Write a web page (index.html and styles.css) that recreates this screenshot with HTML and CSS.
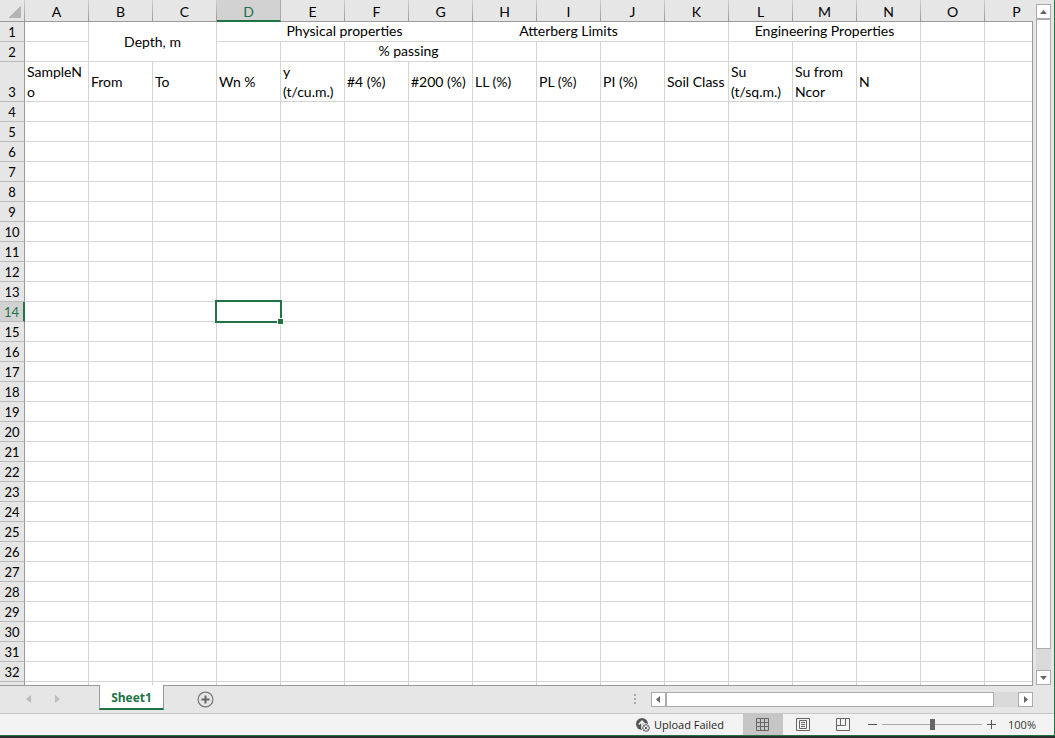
FILE: index.html
```html
<!DOCTYPE html>
<html lang="en">

<head>
  <meta charset="utf-8">
  <meta name="viewport" content="width=device-width">
  <title>Sheet1</title>
  <link rel="stylesheet" href="styles.css">
</head>

<body>
  <div class="window">
    <div class="workarea">
      <div class="grid" id="grid">
        <table class="sheet">
          <thead>
            <tr id="letters">
              <th class="corner"></th>
            </tr>
          </thead>
          <tbody id="rows">
            <tr>
              <th>1</th>
              <td></td>
              <td class="center middle" colspan="2" rowspan="2">Depth, m</td>
              <td class="center" colspan="4">Physical properties</td>
              <td class="center" colspan="3">Atterberg Limits</td>
              <td></td>
              <td class="center" colspan="3">Engineering Properties</td>
            </tr>
            <tr>
              <th>2</th>
              <td></td>
              <td></td>
              <td></td>
              <td class="center" colspan="2">% passing</td>
              <td></td>
              <td></td>
              <td></td>
              <td></td>
              <td></td>
              <td></td>
              <td></td>
            </tr>
            <tr class="tall">
              <th>3</th>
              <td class="break">SampleNo</td>
              <td>From</td>
              <td>To</td>
              <td>Wn %</td>
              <td>y<br>(t/cu.m.)</td>
              <td>#4 (%)</td>
              <td>#200 (%)</td>
              <td>LL (%)</td>
              <td>PL (%)</td>
              <td>PI (%)</td>
              <td>Soil Class</td>
              <td>Su<br>(t/sq.m.)</td>
              <td>Su from Ncor</td>
              <td>N</td>
            </tr>
          </tbody>
        </table>
      </div>

      <div class="vscroll">
        <button class="arrow" aria-label="Scroll up"><svg width="7" height="4"><path d="M0 4L3.5 0L7 4Z"/></svg></button>
        <div class="vthumb"></div>
        <div class="vtrack"></div>
        <button class="arrow" aria-label="Scroll down"><svg width="7" height="4"><path d="M0 0L3.5 4L7 0Z"/></svg></button>
      </div>
    </div>

    <div class="tabbar">
      <div class="tabnav">
        <button aria-label="Previous sheet" disabled><svg width="5" height="8"><path d="M5 0L0 4L5 8Z"/></svg></button>
        <button aria-label="Next sheet" disabled><svg width="5" height="8"><path d="M0 0L5 4L0 8Z"/></svg></button>
      </div>
      <button class="tab">Sheet1</button>
      <button class="add" aria-label="New sheet">
        <svg width="17" height="17" viewBox="0 0 17 17">
          <circle cx="8.5" cy="8.5" r="7.4" fill="none" stroke="#777" stroke-width="1.2"/>
          <path d="M4.5 8.5H12.5M8.5 4.5V12.5" stroke="#666" stroke-width="2"/>
        </svg>
      </button>
      <svg class="dots" width="2" height="10"><path d="M0 0h2v2h-2zM0 4h2v2h-2zM0 8h2v2h-2z"/></svg>
      <div class="hscroll">
        <button class="arrow" aria-label="Scroll left"><svg width="4" height="7"><path d="M4 0L0 3.5L4 7Z"/></svg></button>
        <div class="hthumb"></div>
        <div class="htrack"></div>
        <button class="arrow" aria-label="Scroll right"><svg width="4" height="7"><path d="M0 0L4 3.5L0 7Z"/></svg></button>
      </div>
    </div>

    <div class="statusbar">
      <div class="upload">
        <svg width="14" height="14" viewBox="0 0 14 14">
          <circle cx="6" cy="6" r="6" fill="#555"/>
          <path d="M6 10.500V4M2.800 6.500L6 3.200L9.200 6.500" fill="none" stroke="#f3f3f3" stroke-width="1.600"/>
          <circle cx="10" cy="10" r="4.500" fill="#f3f3f3"/>
          <circle cx="10" cy="10" r="3.300" fill="#f3f3f3" stroke="#555"/>
          <path d="M8.500 8.500L11.500 11.500M11.500 8.500L8.500 11.500" stroke="#555"/>
        </svg>
        <span>Upload Failed</span>
      </div>
      <button class="view active" aria-label="Normal">
        <svg width="14" height="14" viewBox="0 0 14 14"><path d="M.5.5h12v12H.5zM4.500.5v12M8.500.5v12M.5 4.500h12M.5 8.500h12"/></svg>
      </button>
      <button class="view" aria-label="Page layout">
        <svg width="14" height="14" viewBox="0 0 14 14"><path d="M.5.5h13v12H.5zM3.500 2.500h7v8h-7zM5 4.500h4M5 6.500h4M5 8.500h4"/></svg>
      </button>
      <button class="view" aria-label="Page break preview">
        <svg width="14" height="14" viewBox="0 0 14 14"><path d="M.5.5h13v12H.5zM4.500.5v7M9.500.5v7M.5 7.500h9"/></svg>
      </button>
      <button class="zoom-btn" aria-label="Zoom out"><svg width="9" height="9"><path d="M0 4.500h9"/></svg></button>
      <input class="zoom" type="range" min="0" max="100" value="50" aria-label="Zoom">
      <button class="zoom-btn" aria-label="Zoom in"><svg width="9" height="9"><path d="M0 4.500h9M4.500 0v9"/></svg></button>
      <button class="percent">100%</button>
    </div>
  </div>

  <script src="grid.js"></script>
</body>

</html>
```
FILE: grid.js
```js
const COL_WIDTH = 64;
const ROW_HEIGHT = 20;
const selected = { col: 'D', row: 14 };

const grid = document.getElementById('grid');
const letters = document.getElementById('letters');
const rows = document.getElementById('rows');

const colCount = Math.min(26, Math.ceil((grid.clientWidth - 25) / COL_WIDTH));
// row 3 is double height, the column letters take 22px
const rowCount = Math.ceil((grid.clientHeight - 22) / ROW_HEIGHT) - 1;

for (let c = 0; c < colCount; c++) {
  const th = document.createElement('th');
  th.textContent = String.fromCharCode(65 + c);
  if (th.textContent === selected.col) th.className = 'selected';
  letters.appendChild(th);
}

// pad the heading rows past column N
for (const tr of rows.children) {
  for (let c = 14; c < colCount; c++) {
    tr.insertCell();
  }
}

for (let r = 4; r <= rowCount; r++) {
  const tr = rows.insertRow();
  const th = document.createElement('th');
  // the last row is only partly in view, so it gets no number
  if (r < rowCount) th.textContent = r;
  tr.appendChild(th);
  for (let c = 0; c < colCount; c++) {
    const td = tr.insertCell();
    if (r === selected.row && String.fromCharCode(65 + c) === selected.col) {
      th.className = 'selected';
      td.className = 'cursor';
    }
  }
}
```
FILE: styles.css
```css
html, body {
  height: 100%;
  margin: 0;
}

body {
  box-sizing: border-box;
  padding-bottom: 2px;
  background-color: #2b2e2d;
  font-family: "Open Sans", "Noto Sans", sans-serif;
  font-size: 12px;
  color: #000;
  overflow: hidden;
}

button {
  margin: 0;
  padding: 0;
  border: none;
  background: none;
  font: inherit;
  display: flex;
  align-items: center;
  justify-content: center;
}

svg {
  display: block;
}

.window {
  box-sizing: border-box;
  height: 100%;
  display: flex;
  flex-direction: column;
  border-right: 1px solid #217346;
  border-bottom: 1px solid #217346;
  background-color: #e6e6e6;
}

.workarea {
  flex: 1;
  min-height: 0;
  display: flex;
}

/* cells */

.grid {
  flex: 1;
  min-width: 0;
  position: relative;
  overflow: hidden;
}

.grid::after {
  content: "";
  position: absolute;
  top: 21px;
  right: 0;
  bottom: 0;
  width: 1px;
  background-color: #999;
}

.sheet {
  width: 0;
  table-layout: fixed;
  border-collapse: separate;
  border-spacing: 0;
  background-color: #fff;
  font-family: Lato, "Open Sans", sans-serif;
  font-size: 14px;
  line-height: 18px;
}

th, td {
  box-sizing: border-box;
  height: 20px;
  padding: 0 2px;
}

th {
  background-color: #e6e6e6;
  font-weight: normal;
  text-align: center;
}

thead th {
  width: 64px;
  height: 22px;
  padding-top: 3px;
  border-bottom: 1px solid #999;
  border-right: 1px solid;
  border-image: linear-gradient(#d0d0d0, #999) 1;
}

thead .corner {
  width: 25px;
  background: linear-gradient(135deg, transparent 50%, #b4b4b4 50%) 9px 6px / 12px 12px no-repeat #e6e6e6;
}

tbody th {
  padding: 0;
  border-right: 1px solid #999;
  border-bottom: 1px solid #bbb;
  font-size: 13px;
  vertical-align: bottom;
}

th.selected {
  background-color: #d2d2d2;
  color: #217346;
}

thead th.selected {
  border-image: none;
  border-right-color: #aaa;
  border-bottom: 2px solid #217346;
  line-height: 17px;
}

tbody th.selected {
  border-right: 2px solid #217346;
}

td {
  border-right: 1px solid #d4d4d4;
  border-bottom: 1px solid #d4d4d4;
  vertical-align: top;
  white-space: nowrap;
}

.center {
  text-align: center;
}

.middle {
  vertical-align: middle;
}

/* two full lines of text, so the bottom line is drawn inside the cell */
.tall td {
  height: 40px;
  line-height: 20px;
  vertical-align: middle;
  white-space: normal;
  padding: 0 0 0 2px;
  border-bottom: none;
  box-shadow: inset 0 -1px #d4d4d4;
}

.tall .break {
  word-break: break-all;
}

.cursor {
  position: relative;
}

.cursor::before {
  content: "";
  position: absolute;
  inset: -2px;
  border: 2px solid #217346;
  z-index: 1;
}

.cursor::after {
  content: "";
  position: absolute;
  right: -4px;
  bottom: -4px;
  width: 5px;
  height: 5px;
  border: 1px solid #fff;
  background-color: #217346;
  z-index: 2;
}

/* scroll bars */

.arrow {
  box-sizing: border-box;
  width: 15px;
  height: 15px;
  border: 1px solid #ababab;
  background-color: #fff;
  fill: #666;
}

.vscroll {
  display: flex;
  flex-direction: column;
  width: 15px;
  padding: 4px 3px 0;
}

.vthumb {
  flex: 1;
  border: 1px solid #ababab;
  background-color: #fff;
}

.vtrack {
  height: 21px;
  background-color: #dadada;
}

.hscroll {
  display: flex;
  flex: 0 0 37%;
}

.hthumb {
  flex: 1;
  border: 1px solid #ababab;
  background-color: #fff;
}

.htrack {
  width: 24px;
  background-color: #dadada;
}

/* sheet tabs */

.tabbar {
  box-sizing: border-box;
  height: 29px;
  display: flex;
  align-items: center;
  padding-right: 21px;
  border-bottom: 1px solid #c6c6c6;
  background: linear-gradient(#999, #999) 0 0 / calc(100% - 21px) 1px no-repeat;
}

.tabnav {
  display: flex;
  gap: 24px;
  width: 73px;
  padding-left: 26px;
  fill: #bcbcbc;
}

.tab {
  box-sizing: border-box;
  align-self: flex-start;
  width: 65px;
  height: 25px;
  padding-top: 2px;
  border: 1px solid #999;
  border-top: none;
  border-bottom: 2px solid #217346;
  background-color: #fff;
  color: #217346;
  font-size: 12px;
  font-weight: bold;
}

.add {
  margin-left: 33px;
}

.dots {
  margin-left: auto;
  margin-right: 15px;
  fill: #aaa;
}

/* status bar */

.statusbar {
  height: 21px;
  display: flex;
  align-items: center;
  justify-content: flex-end;
  padding-right: 18px;
  background-color: #f3f3f3;
  color: #262626;
}

.upload {
  display: flex;
  align-items: center;
  gap: 4px;
  margin-right: 19px;
  font-size: 11px;
  font-weight: 500;
}

.view {
  width: 40px;
  height: 21px;
  fill: none;
  stroke: #666;
}

.view.active {
  background-color: #c6c6c6;
}

.zoom-btn {
  width: 9px;
  stroke: #555;
}

.view + .zoom-btn {
  margin-left: 5px;
}

.zoom {
  appearance: none;
  width: 100px;
  height: 11px;
  margin: 0 5px;
  background: linear-gradient(#ababab, #ababab) 0 5px / 100% 1px no-repeat;
}

.zoom::-webkit-slider-thumb {
  appearance: none;
  width: 5px;
  height: 11px;
  background-color: #666;
}

.percent {
  width: 28px;
  margin-left: 12px;
  color: #333;
  font-size: 11px;
}
```
